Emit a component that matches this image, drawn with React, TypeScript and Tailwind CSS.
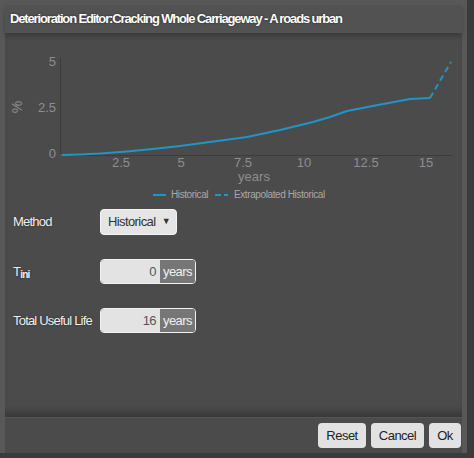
import React from 'react';

const font = { fontFamily: '"Liberation Sans", Arial, sans-serif' };

const histPoints: [number, number][] = [
  [62, 155], [80, 154.4], [100, 153.4], [127, 151.4], [155, 148.8], [180, 146],
  [210, 142], [247, 137], [280, 130], [313, 122], [330, 117], [347, 111],
  [378, 105], [410, 99], [430, 98],
];

const Chart: React.FC = () => {
  const path = histPoints.map((p, i) => `${i === 0 ? 'M' : 'L'}${p[0]} ${p[1]}`).join(' ');
  const xTicks = [
    { x: 121, t: '2.5' }, { x: 181, t: '5' }, { x: 243, t: '7.5' },
    { x: 304, t: '10' }, { x: 366, t: '12.5' }, { x: 426, t: '15' },
  ];
  return (
    <svg width={462} height={172} viewBox="5 33 462 172" className="block" style={font}>
      <line x1={60.5} y1={58} x2={60.5} y2={155} stroke="#3c3c3c" strokeWidth={1} />
      <line x1={60} y1={155.5} x2={452} y2={155.5} stroke="#3c3c3c" strokeWidth={1} />
      <g fill="#8e8e8e" fontSize={13}>
        <text x={56} y={66} textAnchor="end">5</text>
        <text x={56} y={112} textAnchor="end">2.5</text>
        <text x={56} y={158} textAnchor="end">0</text>
        {xTicks.map((t) => (
          <text key={t.t} x={t.x} y={167} textAnchor="middle">{t.t}</text>
        ))}
        <text x={254} y={181} textAnchor="middle">years</text>
        <text x={0} y={0} fontSize={14} textAnchor="middle" transform="translate(22 107) rotate(-90)">%</text>
      </g>
      <line x1={60} y1={155} x2={72} y2={155} stroke="#555" strokeWidth={2} />
      <path d={path} fill="none" stroke="#1f95c8" strokeWidth={2} strokeLinejoin="round" />
      <line x1={430} y1={98} x2={451} y2={62} stroke="#1f95c8" strokeWidth={2} strokeDasharray="6 4" />
      <g fontSize={10} fill="#a8a8a8" letterSpacing={-0.4}>
        <line x1={153} y1={195} x2={166} y2={195} stroke="#1f95c8" strokeWidth={2} />
        <text x={171} y={198}>Historical</text>
        <line x1={215} y1={195} x2={228} y2={195} stroke="#1f95c8" strokeWidth={2} strokeDasharray="6 3" />
        <text x={234} y={198}>Extrapolated Historical</text>
      </g>
    </svg>
  );
};

const UnitInput: React.FC<{ value: string }> = ({ value }) => (
  <div className="flex w-[96px] h-[25px] rounded-[4px] overflow-hidden border border-[#f2f2f2] text-[13px] tracking-[-0.6px] [text-shadow:none]">
    <div className="flex-1 bg-[#e3e3e3] text-right pr-[4px] leading-[23px] text-[#555]">{value}</div>
    <div className="w-[35px] bg-[#767676] text-[#f0f0f0] text-center leading-[23px]">years</div>
  </div>
);

const Button: React.FC<{ label: string; w: string }> = ({ label, w }) => (
  <button className={`${w} h-[25px] rounded-[4px] bg-[#e2e2e2] text-[#222] text-[13px] tracking-[-0.5px]`}>
    {label}
  </button>
);

export default function App() {
  return (
    <div className="w-[474px] h-[458px] bg-[#3b3b3b]" style={font}>
      <div className="w-[467px] h-[453px] bg-[#585858] pt-[5px] px-[5px] flex flex-col">
        <div className="h-[28px] bg-[#525252] shadow-[0_3px_5px_rgba(0,0,0,0.25)] z-10 flex items-center pl-[5px]">
          <span className="text-white font-bold text-[13px] tracking-[-1.15px] [text-shadow:0_0_2px_rgba(0,0,0,0.6)]">
            Deterioration Editor:Cracking Whole Carriageway - A roads urban
          </span>
        </div>
        <div className="h-[384px] bg-[#4b4b4b] shadow-[inset_0_-10px_8px_-6px_rgba(0,0,0,0.3)]">
          <Chart />
          <div className="pl-[8px] text-[13px] text-[#f0f0f0] tracking-[-0.8px] [text-shadow:0_0_2px_rgba(0,0,0,0.5)]">
            <div className="flex items-center h-[26px] mt-[4px]">
              <div className="w-[87px]">Method</div>
              <div className="w-[77px] h-[26px] rounded-[4px] bg-[#e5e5e5] border border-[#f4f4f4] flex items-center justify-between pl-[7px] pr-[6px] text-[#333] [text-shadow:none] tracking-[-0.6px]">
                <span>Historical</span>
                <span className="text-[9px]">▼</span>
              </div>
            </div>
            <div className="flex items-center h-[25px] mt-[24px]">
              <div className="w-[87px]">
                T<sub className="text-[10px] font-bold">ini</sub>
              </div>
              <UnitInput value="0" />
            </div>
            <div className="flex items-center h-[25px] mt-[24px]">
              <div className="w-[87px]">Total Useful Life</div>
              <UnitInput value="16" />
            </div>
          </div>
        </div>
        <div className="flex-1 bg-[#4b4b4b] border-t border-[#555] flex items-center justify-end gap-[5px] pr-[1px]">
          <Button label="Reset" w="w-[48px]" />
          <Button label="Cancel" w="w-[53px]" />
          <Button label="Ok" w="w-[32px]" />
        </div>
      </div>
    </div>
  );
}
